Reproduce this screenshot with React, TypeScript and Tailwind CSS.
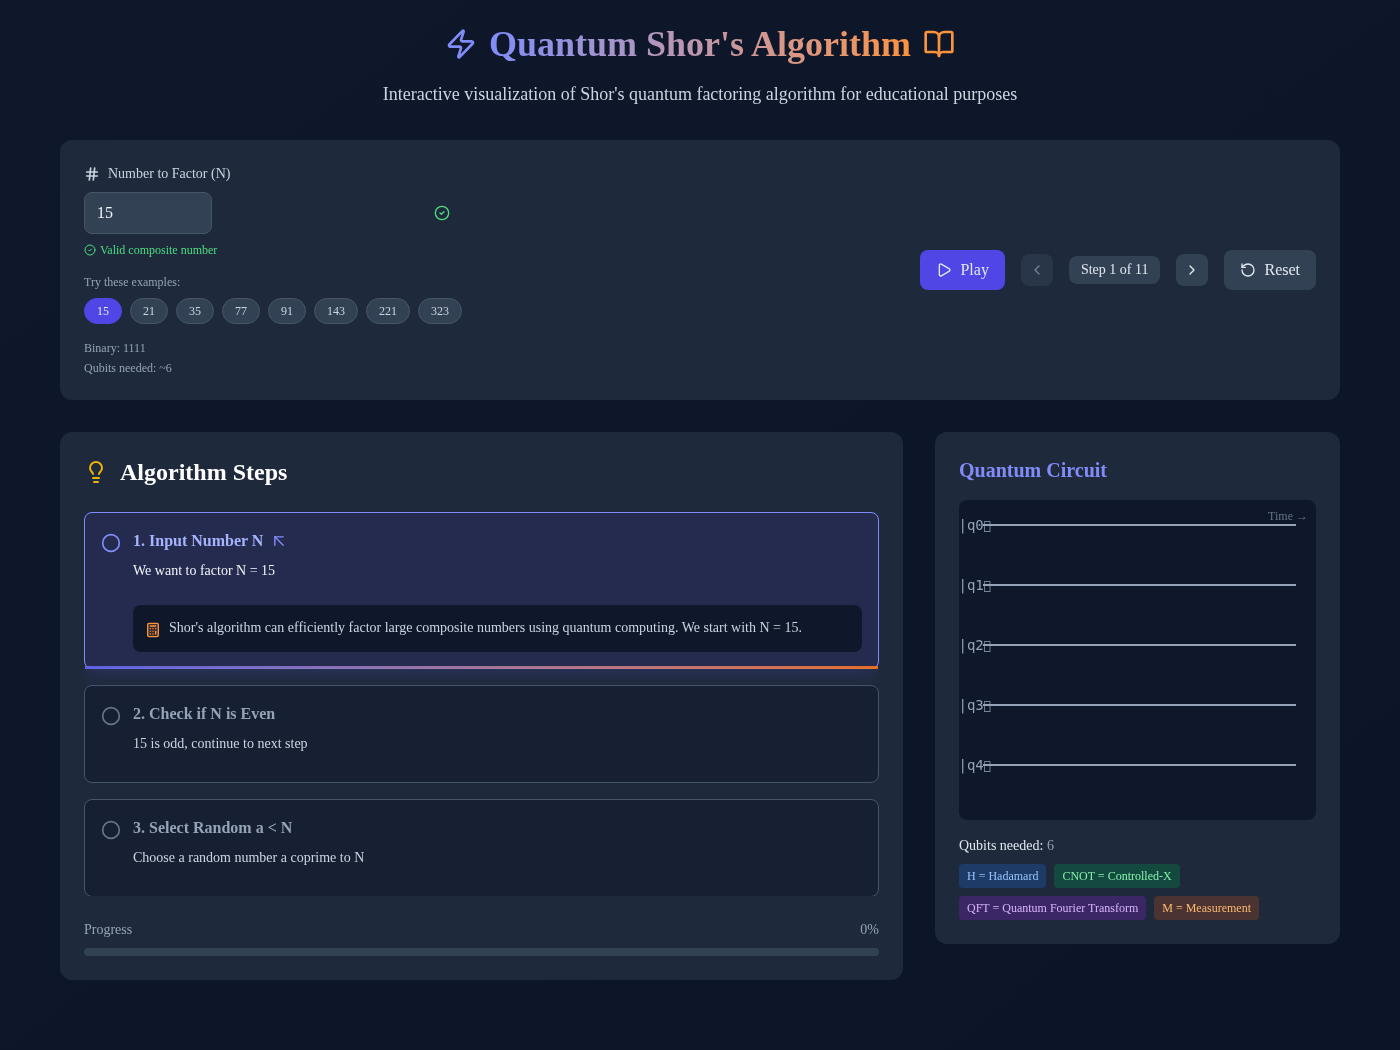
import { ArrowUpLeft, BookOpen, Calculator, ChevronLeft, ChevronRight, Circle, CircleCheck, Hash, Lightbulb, Play, RotateCcw, Zap } from "lucide-react";

const examples = [15, 21, 35, 77, 91, 143, 221, 323];
const wires = [0, 1, 2, 3, 4];

function Controls() {
  return (
    <div className="flex items-center gap-4">
      <button className="flex h-10 items-center gap-2 rounded-lg bg-[#4f46e5] px-4 text-base text-[#e2e8f0]">
        <Play size={16} />
        Play
      </button>
      <button className="flex h-8 w-8 items-center justify-center rounded-lg bg-[#334155]/50 text-[#94a3b8]/70">
        <ChevronLeft size={16} />
      </button>
      <div className="flex h-7 items-center rounded-lg bg-[#334155] px-3 text-sm text-[#e2e8f0]">Step 1 of 11</div>
      <button className="flex h-8 w-8 items-center justify-center rounded-lg bg-[#334155] text-[#e2e8f0]">
        <ChevronRight size={16} />
      </button>
      <button className="flex h-10 items-center gap-2 rounded-lg bg-[#334155] px-4 text-base text-[#e2e8f0]">
        <RotateCcw size={16} />
        Reset
      </button>
    </div>
  );
}

function InputPanel() {
  return (
    <section className="flex h-[260px] items-center justify-between rounded-xl bg-[#1e293b] p-6">
      <div className="self-start">
        <label className="flex h-5 items-center gap-2 text-sm text-[#cbd5e1]">
          <Hash size={16} strokeWidth={2.5} />
          Number to Factor (N)
        </label>
        <div className="relative mt-2">
          <div className="flex h-[42px] w-32 items-center rounded-lg border border-[#475569] bg-[#334155] px-3 text-base text-[#f1f5f9]">15</div>
          <CircleCheck size={16} className="absolute top-[13px] left-[350px] text-[#4ade80]" />
        </div>
        <p className="mt-2 flex h-4 items-center gap-1 text-xs text-[#4ade80]">
          <CircleCheck size={12} />
          Valid composite number
        </p>
        <p className="mt-4 h-4 text-xs text-[#94a3b8]">Try these examples:</p>
        <div className="mt-2 flex gap-2">
          {examples.map((n) => (
            <button
              key={n}
              className={
                n === 15
                  ? "h-[26px] rounded-full border border-[#4f46e5] bg-[#4f46e5] px-3 text-xs text-[#e2e8f0]"
                  : "h-[26px] rounded-full border border-[#475569] bg-[#334155] px-3 text-xs text-[#cbd5e1]"
              }
            >
              {n}
            </button>
          ))}
        </div>
        <div className="mt-[14px] text-xs leading-5 text-[#94a3b8]">
          <p>Binary: 1111</p>
          <p>Qubits needed: ~6</p>
        </div>
      </div>
      <Controls />
    </section>
  );
}

function ActiveStep() {
  return (
    <div className="relative h-[157px] shrink-0 rounded-lg border border-[#818cf8] bg-[#252b4f] p-4 shadow-[0_4px_20px_rgba(99,102,241,0.2)]">
      <div className="flex gap-3">
        <Circle size={20} className="mt-1 shrink-0 text-[#818cf8]" />
        <div className="flex-1">
          <h3 className="flex h-6 items-center gap-[6px] text-base font-bold text-[#a5b4fc]">
            1. Input Number N
            <ArrowUpLeft size={20} strokeWidth={1.7} className="text-[#818cf8]" />
          </h3>
          <p className="mt-2 text-sm text-[#f1f5f9]">We want to factor N = 15</p>
          <div className="mt-6 flex h-[47px] items-center gap-2 rounded-lg bg-[#0f172a] px-3 text-sm text-[#cbd5e1]">
            <Calculator size={16} className="mt-0.5 fill-[#fb923c]/20 text-[#fb923c]" />
            <span className="-mt-0.5">Shor's algorithm can efficiently factor large composite numbers using quantum computing. We start with N = 15.</span>
          </div>
        </div>
      </div>
      <div className="absolute right-0 -bottom-px left-0 h-[3px] bg-gradient-to-r from-[#6366f1] to-[#f97316] opacity-90" />
    </div>
  );
}

function Step({ title, text }: { title: string; text: string }) {
  return (
    <div className="h-[98px] shrink-0 rounded-lg border border-[#475569] bg-[#172033] p-4">
      <div className="flex gap-3">
        <Circle size={20} className="mt-1 shrink-0 text-[#64748b]" />
        <div>
          <h3 className="h-6 text-base leading-6 font-bold text-[#94a3b8]">{title}</h3>
          <p className="mt-2 text-sm text-[#cbd5e1]">{text}</p>
        </div>
      </div>
    </div>
  );
}

function StepsPanel() {
  return (
    <section className="w-[843px] shrink-0 rounded-xl bg-[#1e293b] p-6">
      <h2 className="flex h-8 items-center gap-3 text-2xl font-bold text-white">
        <Lightbulb size={24} className="text-[#eab308]" />
        Algorithm Steps
      </h2>
      <div className="mt-6 flex h-[384px] flex-col gap-4 overflow-hidden">
        <ActiveStep />
        <Step title="2. Check if N is Even" text="15 is odd, continue to next step" />
        <Step title="3. Select Random a < N" text="Choose a random number a coprime to N" />
      </div>
      <div className="mt-6 flex justify-between text-sm text-[#94a3b8]">
        <span>Progress</span>
        <span>0%</span>
      </div>
      <div className="mt-2 h-2 rounded-full bg-[#334155]" />
    </section>
  );
}

function CircuitPanel() {
  return (
    <section className="flex-1 self-start rounded-xl bg-[#1e293b] p-6">
      <h2 className="text-xl font-bold text-[#818cf8]">Quantum Circuit</h2>
      <div className="mt-4 h-80 rounded-lg bg-[#0f172a]">
        <svg width="357" height="320">
          <text x="349" y="20" textAnchor="end" fontSize="12" fill="#64748b">Time →</text>
          {wires.map((q) => (
            <g key={q}>
              <text x="-0.5" y={30 + q * 60} fontSize="14" fill="#94a3b8" fontFamily="monospace">
                |q{q}
                <tspan fontSize="12">{"\u{E000}"}</tspan>
              </text>
              <line x1="24" y1={25 + q * 60} x2="337" y2={25 + q * 60} stroke="#94a3b8" strokeWidth="2" />
            </g>
          ))}
        </svg>
      </div>
      <p className="mt-4 text-sm text-[#e2e8f0]">
        Qubits needed: <span className="text-[#94a3b8]">6</span>
      </p>
      <div className="mt-2 flex flex-wrap gap-2 text-xs">
        <span className="flex h-6 items-center rounded bg-[#1e3a66] px-2 text-[#93c5fd]">H = Hadamard</span>
        <span className="flex h-6 items-center rounded bg-[#14493f] px-2 text-[#86efac]">CNOT = Controlled-X</span>
        <span className="flex h-6 items-center rounded bg-[#3b2766] px-2 text-[#d8b4fe]">QFT = Quantum Fourier Transform</span>
        <span className="flex h-6 items-center rounded bg-[#4a3330] px-2 text-[#fdba74]">M = Measurement</span>
      </div>
    </section>
  );
}

export default function App() {
  return (
    <div className="min-h-[1050px] bg-gradient-to-br from-[#0f172a] to-[#0c1527] px-[60px] pt-5 font-['Liberation_Serif',serif] antialiased">
      <header className="text-center will-change-transform">
        <h1 className="flex h-12 items-center justify-center gap-3 text-4xl font-bold">
          <Zap size={32} className="text-[#818cf8]" />
          <span className="bg-gradient-to-r from-[#818cf8] to-[#fb923c] bg-clip-text text-transparent">Quantum Shor's Algorithm</span>
          <BookOpen size={32} className="text-[#fb923c]" />
        </h1>
        <p className="mt-3 text-lg text-[#cbd5e1]">Interactive visualization of Shor's quantum factoring algorithm for educational purposes</p>
      </header>
      <main className="mt-8 flex flex-col gap-8 will-change-transform">
        <InputPanel />
        <div className="flex items-start gap-8">
          <StepsPanel />
          <CircuitPanel />
        </div>
      </main>
    </div>
  );
}
